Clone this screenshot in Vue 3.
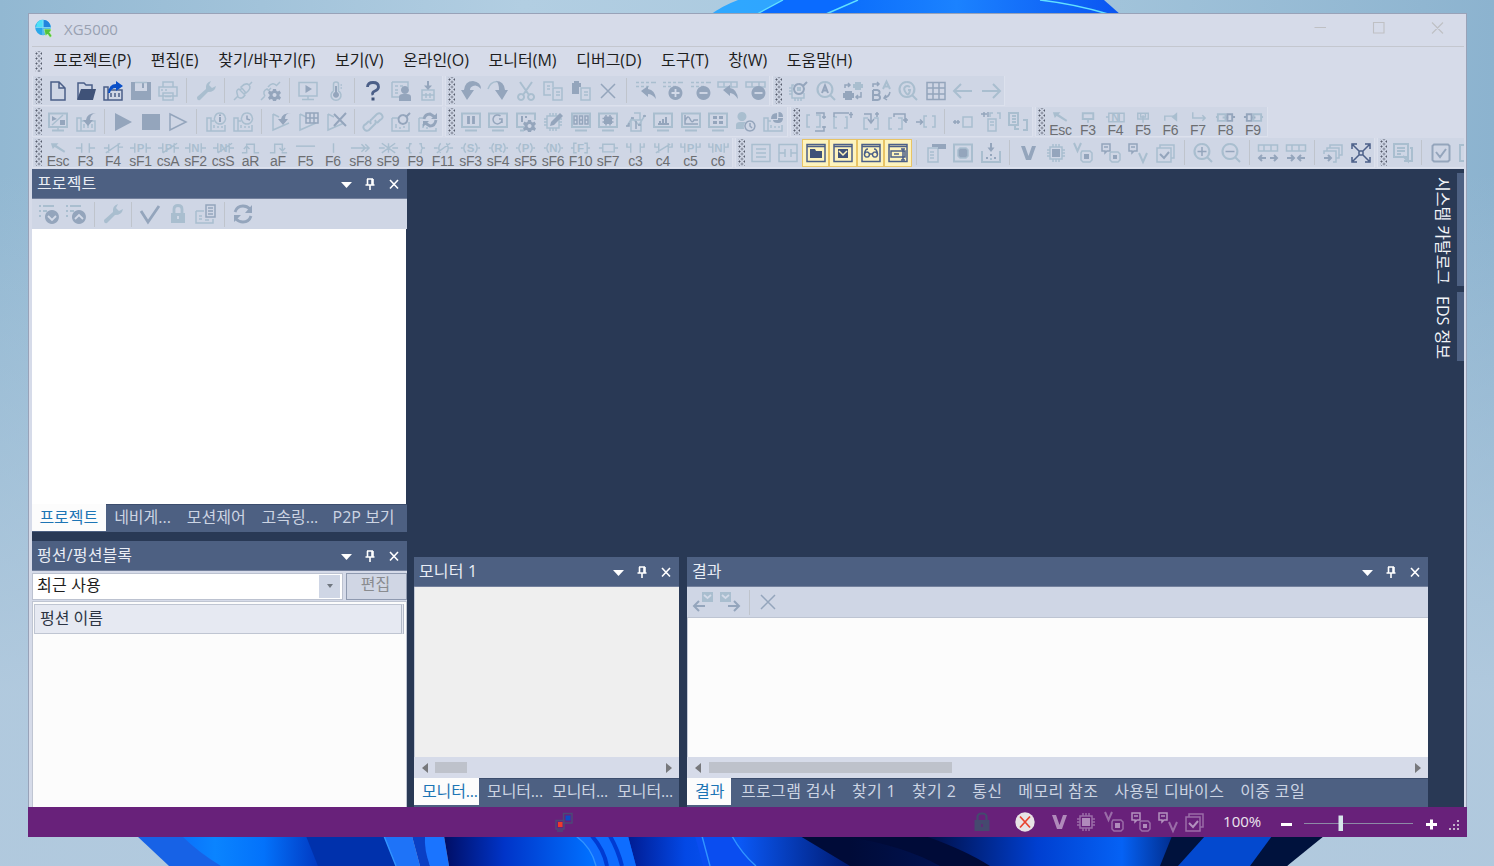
<template>
  <div class="desktop">
    <svg class="wallpaper" viewBox="0 0 1494 866">
      <defs>
        <linearGradient id="sky" x1="0" y1="0" x2="1" y2="0">
          <stop offset="0" stop-color="#92b8d2" />
          <stop offset="0.35" stop-color="#b2cee2" />
          <stop offset="0.7" stop-color="#a5c6dc" />
          <stop offset="1" stop-color="#8cb3cf" />
        </linearGradient>
        <linearGradient id="haze" x1="0" y1="0" x2="0" y2="1">
          <stop offset="0.2" stop-color="#b4cbdf" stop-opacity="0" />
          <stop offset="0.8" stop-color="#b4cbdf" stop-opacity="0.9" />
        </linearGradient>
        <linearGradient id="g1" gradientUnits="userSpaceOnUse" x1="180" y1="0" x2="320" y2="0">
          <stop offset="0" stop-color="#0a70fa" />
          <stop offset="0.25" stop-color="#0a84ff" />
          <stop offset="0.6" stop-color="#0372fb" />
          <stop offset="1" stop-color="#0138c0" />
        </linearGradient>
        <linearGradient id="g2" gradientUnits="userSpaceOnUse" x1="446" y1="0" x2="640" y2="0">
          <stop offset="0" stop-color="#000f68" />
          <stop offset="0.3" stop-color="#0034c8" />
          <stop offset="0.75" stop-color="#0070ff" />
          <stop offset="1" stop-color="#0452e8" />
        </linearGradient>
        <linearGradient id="g3" gradientUnits="userSpaceOnUse" x1="630" y1="0" x2="850" y2="0">
          <stop offset="0" stop-color="#001d95" />
          <stop offset="0.25" stop-color="#0348e5" />
          <stop offset="0.5" stop-color="#0a58f5" />
          <stop offset="1" stop-color="#001a70" />
        </linearGradient>
        <linearGradient id="g4" gradientUnits="userSpaceOnUse" x1="850" y1="0" x2="1190" y2="0">
          <stop offset="0" stop-color="#000b38" />
          <stop offset="0.25" stop-color="#00124f" />
          <stop offset="0.55" stop-color="#003fd0" />
          <stop offset="0.8" stop-color="#0562f5" />
          <stop offset="1" stop-color="#001b6a" />
        </linearGradient>
        <linearGradient id="g5" gradientUnits="userSpaceOnUse" x1="713" y1="0" x2="1119" y2="0">
          <stop offset="0" stop-color="#2fa8ff" />
          <stop offset="0.25" stop-color="#2fa4ff" />
          <stop offset="0.3" stop-color="#0a6cfb" />
          <stop offset="0.6" stop-color="#1b82ff" />
          <stop offset="1" stop-color="#0a55f2" />
        </linearGradient>
      </defs>
      <rect width="1494" height="866" fill="url(#sky)" />
      <rect width="1494" height="866" fill="url(#haze)" />
      <path fill="url(#g5)" d="M710 15 Q722 6 738 0H1104L1121 15Z" />
      <path fill="#0a6bff" d="M757 14 L783 0H850L826 14Z" />
      <path fill="none" stroke="#62e0ff" stroke-width="1.4" d="M757 14L783 0M826 14L858 0M1040 0Q1075 4 1108 14" />
      <path fill="#1762e6" d="M137 836H400V866H169Z" />
      <path fill="url(#g1)" d="M182 836H400V866H221Q198 852 182 836Z" />
      <path fill="#0031ac" d="M306 836H390L400 866H318Z" />
      <path fill="#1e73f8" d="M384 836H412L420 866H396Z" />
      <path fill="#0a3fc4" d="M412 836H426L430 866H420Z" />
      <path fill="#1a74ff" d="M425 836H444L449 866H430Q424 850 425 836Z" />
      <path fill="url(#g2)" d="M444 836H640V866H449Z" />
      <path fill="url(#g3)" d="M628 836H850V866H636Z" />
      <path fill="#0e6dff" d="M576 836Q592 848 596 866H636L628 836Z" />
      <path fill="none" stroke="#003bd2" stroke-width="4" d="M592 836Q604 850 607 866M610 836Q618 850 622 866" />
      <path fill="#0a4df0" d="M695 836H730Q744 854 754 866H703Z" />
      <path fill="none" stroke="#3194ff" stroke-width="1.4" d="M702 836L710 866M732 836Q742 854 756 866M384 836L396 866M576 836Q592 848 596 866" />
      <path fill="url(#g4)" d="M800 836H1324Q1300 848 1287 866H850Z" />
      <path fill="#000b38" d="M845 836H925Q965 850 990 866H940Q905 846 845 836Z" />
      <path fill="#00123d" d="M1172 836H1324L1287 866H1160Z" />
      <path fill="#0349cf" d="M1205 836H1272L1250 866H1178Z" />
    </svg>

    <div class="window">
      <div class="frame">
        <div class="titlebar">
          <svg class="logo" viewBox="0 0 18 20">
            <circle cx="8" cy="8.5" r="7.8" fill="#2ba7ea" />
            <path d="M2 4Q5 0 8 1V8H1Z" fill="#4edff5" />
            <path d="M9 1Q15 2 15.500 8H9Z" fill="#2385dd" />
            <path d="M8 0.700V16M0.300 8.500H15.700" stroke="#8fdcf5" stroke-width="0.800" fill="none" />
            <path d="M9 10H16V12L14.500 13 17 17 15 18.500 12.500 15 10.500 17Z" fill="#55c33a" stroke="#d5f5c8" stroke-width="0.600" />
          </svg>
          <span class="app-name">XG5000</span>
          <svg class="controls" viewBox="0 0 130 14">
            <path d="M0.500 6.500H12M59.500 1.500H70V12H59.500ZM118 1.500L129 12.500M129 1.500L118 12.500" />
          </svg>
        </div>

        <div class="menubar">
          <i class="grip"></i>
          <span v-for="m in menus" :key="m" class="menu">{{ m }}</span>
        </div>

        <div v-for="(row, r) in toolRows" :key="r" class="tool-row">
          <div v-for="(bar, b) in row" :key="b" class="toolbar">
            <i class="grip"></i>
            <template v-for="(item, i) in bar" :key="i">
              <i v-if="item === '|'" class="sep"></i>
              <span v-else-if="item.includes(':')" class="btn key">
                <svg viewBox="0 0 22 12">
                  <template v-for="(p, k) in keyIcons[item.split(':')[0]]" :key="k">
                    <text v-if="p[0] === 't'" class="glyph" x="11" y="9.500">{{ p[1] }}</text>
                    <path v-else :class="p[0]" :d="p[1]" />
                  </template>
                </svg>
                <b>{{ item.split(':')[1] }}</b>
              </span>
              <span v-else class="btn" :class="{ on: active.includes(item) }">
                <svg viewBox="0 0 20 20">
                  <path v-for="(p, k) in icons[item]" :key="k" :class="p[0]" :d="p[1]" />
                </svg>
              </span>
            </template>
          </div>
        </div>

        <div class="work">
          <div class="side">
            <section class="panel project">
              <header class="head">
                <span>프로젝트</span>
                <svg viewBox="0 0 58 14"><path class="wf" :d="headArrow" /><path class="w" :d="headPin" /></svg>
              </header>
              <div class="panel-tools">
                <template v-for="(item, i) in projectTools" :key="i">
                  <i v-if="item === '|'" class="sep"></i>
                  <span v-else class="btn">
                    <svg viewBox="0 0 20 20">
                      <path v-for="(p, k) in icons[item]" :key="k" :class="p[0]" :d="p[1]" />
                    </svg>
                  </span>
                </template>
              </div>
              <div class="tree"></div>
              <nav class="tabs project-tabs">
                <span v-for="(t, i) in projectTabs" :key="t" :class="{ current: i === 0 }">{{ t }}</span>
              </nav>
            </section>

            <section class="panel functions">
              <header class="head">
                <span>펑션/펑션블록</span>
                <svg viewBox="0 0 58 14"><path class="wf" :d="headArrow" /><path class="w" :d="headPin" /></svg>
              </header>
              <div class="filter">
                <div class="combo"><span>최근 사용</span><i></i></div>
                <button class="edit">편집</button>
              </div>
              <div class="list">
                <div class="list-head">펑션 이름</div>
              </div>
            </section>
          </div>

          <div class="center">
            <section class="panel monitor">
              <header class="head">
                <span>모니터 1</span>
                <svg viewBox="0 0 58 14"><path class="wf" :d="headArrow" /><path class="w" :d="headPin" /></svg>
              </header>
              <div class="blank"></div>
              <div class="scroll"><i class="left"></i><b></b><i class="right"></i></div>
              <nav class="tabs monitor-tabs">
                <span v-for="i in 4" :key="i" :class="{ current: i === 1 }">모니터...</span>
              </nav>
            </section>

            <section class="panel result">
              <header class="head">
                <span>결과</span>
                <svg viewBox="0 0 58 14"><path class="wf" :d="headArrow" /><path class="w" :d="headPin" /></svg>
              </header>
              <div class="panel-tools">
                <template v-for="(item, i) in resultTools" :key="i">
                  <i v-if="item === '|'" class="sep"></i>
                  <span v-else class="btn">
                    <svg viewBox="0 0 20 20">
                      <path v-for="(p, k) in icons[item]" :key="k" :class="p[0]" :d="p[1]" />
                    </svg>
                  </span>
                </template>
              </div>
              <div class="blank"></div>
              <div class="scroll"><i class="left"></i><b></b><i class="right"></i></div>
              <nav class="tabs result-tabs">
                <span v-for="(t, i) in resultTabs" :key="t" :class="{ current: i === 0 }">{{ t }}</span>
              </nav>
            </section>
          </div>

          <aside class="dock">
            <div class="dock-tab catalog">시스템 카탈로그</div>
            <div class="dock-tab eds">EDS 정보</div>
          </aside>
        </div>
      </div>

      <footer class="status">
        <svg class="link" viewBox="0 0 18 20">
          <path d="M8.500 1.500H17V11H8.500ZM1 8.500H9V17H1ZM2 19H8" fill="none" stroke="#4b4a78" stroke-width="1.400" />
          <path d="M10.500 3.500H15.500V8.500H10.500Z" fill="#0d4cc4" />
          <path d="M3 10H7.500V15H3Z" fill="#ee3a2c" />
        </svg>
        <svg class="lock" viewBox="0 0 16 20">
          <path d="M0.500 8H15.500V19H0.500Z" fill="#45496f" />
          <path d="M3.500 9V5Q3.500 1.500 8 1.500T12.500 5V9" fill="none" stroke="#45496f" stroke-width="2.200" />
          <path d="M8 12V15" stroke="#68217a" stroke-width="1.500" />
        </svg>
        <svg class="error" viewBox="0 0 20 20">
          <circle cx="10" cy="10" r="9.700" fill="#e8e4e6" />
          <path d="M5 4.500L15 15.500M15 4.500L5 15.500" stroke="#e8442f" stroke-width="1.700" />
        </svg>
        <span v-for="s in statusIcons" :key="s" class="btn">
          <svg viewBox="0 0 20 20">
            <path v-for="(p, k) in icons[s]" :key="k" :class="p[0]" :d="p[1]" />
          </svg>
        </span>
        <span class="zoom">100%</span>
        <svg class="slider" viewBox="0 0 184 24">
          <path d="M0 13H11V16H0ZM145 13H156V16H145ZM149 9.500H152V19.500H149Z" fill="#fff" />
          <path d="M23 13.500H132" stroke="#8d8aa6" stroke-width="1.200" />
          <path d="M57.500 5.500H62V21H57.500Z" fill="#d6e6ea" />
          <path d="M176 10h2v2h-2zM176 14h2v2h-2zM172 14h2v2h-2zM176 18h2v2h-2zM172 18h2v2h-2zM168 18h2v2h-2z" fill="#c3b2ca" />
        </svg>
      </footer>
    </div>
  </div>
</template>

<script setup>
const menus = [
  '프로젝트(P)', '편집(E)', '찾기/바꾸기(F)', '보기(V)', '온라인(O)',
  '모니터(M)', '디버그(D)', '도구(T)', '창(W)', '도움말(H)'
]

// '|' is a separator, 'icon:label' is a shortcut key button
const toolRows = [
  [
    ['new', 'open', 'plcOpen', 'save', 'print', '|', 'wrench', '|', 'plug', 'plugGear', '|', 'play', 'thermo', '|', 'help', 'user', 'download'],
    ['undo', 'redo', 'cut', 'copy', 'paste', 'close', '|', 'lineBack', 'lineAdd', 'lineDel', 'cellBack', 'cellDel'],
    ['chipFind', 'findA', 'chipSwap', 'replace', 'findG', 'grid', 'left', 'right']
  ],
  [
    ['monMode', 'plcDown', '|', 'run', 'stop', 'runLine', '|', 'plcInfo', 'plcTime', '|', 'flagIn', 'flagGrid', 'flagX', '|', 'chain', 'plcCheck', 'plcSync'],
    ['pause', 'refreshMon', 'monGear', 'chipEdit', 'digits', 'chipMon', 'trend', 'bars', 'wave', 'tiles', 'userTime', 'plcPie'],
    ['br1', 'br2', 'br3', 'br4', 'br5', '|', 'br6', 'br7', 'br8'],
    ['arrow:Esc', 'step:F3', 'trans:F4', 'block:F5', 'branch:F6', 'jump:F7', 'pipeL:F8', 'pipeR:F9']
  ],
  [
    ['arrow:Esc', 'no:F3', 'nc:F4', 'p:sF1', 'pf:csA', 'n:sF2', 'nf:csS', 'rise:aR', 'fall:aF', 'hline:F5', 'vline:F6', 'fast:sF8', 'star:sF9', 'coil:F9', 'ncoil:F11', 's:sF3', 'r:sF4', 'cp:sF5', 'cn:sF6', 'f:F10', 'box:sF7', 'or:c3', 'orn:c4', 'orp:c5', 'orq:c6'],
    ['text', 'contact', 'folder', 'mail', 'glasses', 'rename', '|', 'docFlag', 'chipBox', 'tray', '|', 'v', 'chip', 'vChip', 'noteChip', 'noteV', 'checks', '|', 'zoomIn', 'zoomOut', '|', 'widen', 'narrow', '|', 'stack', 'expand'],
    ['notes', '|', 'checkBox', 'more']
  ]
]
const active = ['folder', 'mail', 'glasses', 'rename']
const projectTools = ['listDown', 'listUp', '|', 'wrench', '|', 'tick', 'lock', 'plcDoc', '|', 'sync']
const resultTools = ['mailPrev', 'mailNext', '|', 'close']
const projectTabs = ['프로젝트', '네비게...', '모션제어', '고속링...', 'P2P 보기']
const resultTabs = ['결과', '프로그램 검사', '찾기 1', '찾기 2', '통신', '메모리 참조', '사용된 디바이스', '이중 코일']
const statusIcons = ['v', 'chip', 'vChip', 'noteChip', 'noteV', 'checks']

// panel header buttons
const headArrow = 'M0 5H11L5.500 11Z'
const headPin = 'M26 2H32M26.500 2V8M31 2V8M24.500 8H33.500M29 8V13M32 2V8M49 3L57 11.500M57 3L49 11.500'

// shared shapes
const plc = 'M1 6H5V19H1ZM5 9H19V19H1M8 12V16M12 12V16M16 12V16'
const plcCut = 'M1 6H5V19H1ZM5 9H8M5 19H19V13M8 13V16M12 14V16M16 14V16'
const screen = 'M1 1.500H19V15H1ZM4 18.500H16'
const chipBody = 'M4 4H16V16H4ZM7 1V4M10 1V4M13 1V4M7 16V19M10 16V19M13 16V19M1 7H4M1 10H4M1 13H4M16 7H19M16 10H19M16 13H19'
const lens = 'M14.500 14.500L19 19M9 1A7.500 7.500 0 1 1 8.900 1'
const gear = 'M12 8H15L15.500 10 17 10.500 18.500 9.500 20 12 18.500 13.500V15L20 16.500 18.500 19 17 18 15.500 18.500 15 20H12L11.500 18.500 10 18 8.500 19 7 16.500 8.500 15V13.500L7 12 8.500 9.500 10 10.500 11.500 10ZM13.500 12A2 2 0 1 0 13.600 12Z'
const flag = 'M2 2V18L18 11M2 2L8 5'
const dashes = 'M0 1.500H3M5 1.500H8M10 1.500H13M15 1.500H20M0 5.500H3M5 5.500H8M10 5.500H13'
const ring = 'M14 1A5.500 5.500 0 1 1 13.900 1'
const frame = 'M1 1.500H19V18.500H1ZM1 3.500H19'

// path classes: l/lf light stroke/fill, d/df mid, n/nf navy
const icons = {
  new: [['n', 'M3 1H11L17 7V19H3ZM11 1V7H17']],
  open: [['n', 'M2 18V2H8L10 4H16V8'], ['nf', 'M5 8H20L17 19H1Z']],
  plcOpen: [['n', plc], ['bf', 'M13 0L20 5 13 10V7Q8 7 7 12H5Q6 3 13 3Z']],
  save: [['df', 'M0 1H4V10H16V1H20V19H0ZM11 1H13V7H11Z'], ['l', 'M4 1.500H16']],
  print: [['l', 'M5 6V1H15V6M1 6H19V15H1ZM5 12H15V19H5ZM7 15.500H13M3 9H5M7 9H9']],
  wrench: [['lf', 'M1 16L10 8Q9 2 15 0L13 4 16 7 20 5Q19 11 12 11L4 19Q1 20 1 16Z']],
  plug: [['l', 'M1 19L5 15M4 12Q3 9 6 8L12 14Q9 19 5 16ZM8 6Q13 1 16 4T13 12ZM16 4L19 1M7 9L9 7M11 13L13 11']],
  plugGear: [['l', 'M0 19L4 15M4 15Q1 10 6 8L8 10M7 6Q12 0 16 5M16 4L19 1M8 9L10 7'], ['df', gear]],
  play: [['l', screen], ['l', 'M10 15V18'], ['df', 'M7.500 4L14 8 7.500 12Z']],
  thermo: [['l', 'M7.500 10V3Q7.500 1 10 1T12.500 3V10A5 5 0 1 1 7.500 10M14.500 4H16M14.500 7H16'], ['df', 'M9 5H11V11A3 3 0 1 1 9 11Z']],
  help: [['n3', 'M4.500 6Q4.500 1.500 10 1.500T15.500 6Q15.500 8.500 12 10T10 14'], ['nf', 'M8.500 16.500H11.500V19.500H8.500Z']],
  user: [['l', 'M1 1H17V7M1 1V16H9M4 5H7M9 5H12M4 9H7M4 12H7'], ['df', 'M14 5A4 4 0 1 1 13.900 5ZM8 20V16Q8 13 12 13H16Q20 13 20 16V20Z']],
  download: [['l', 'M4 9H16V19H4ZM8 12V17M12 12V17M4 14H16'], ['d2', 'M10 0V6'], ['df', 'M6 4.500H14L10 9Z']],
  undo: [['df', 'M0 9H3Q4 0 12 0Q20 1 20 8Q16 3 12 5Q9 6 9 9H13L6 19Z']],
  redo: [['l', 'M0 8Q2 1 9 0.500'], ['df', 'M20 9H17Q16 0 8 0Q11 2 11 9H7L14 19Z']],
  cut: [['l2', 'M4 1L13 14M16 1L7 14M5 13A3 3 0 1 0 5.100 13M15 13A3 3 0 1 0 15.100 13']],
  copy: [['l', 'M10 6V1H1V14H8M4 5H7M4 8H7M10 7H19V19H10ZM13 11H17M13 14H17']],
  paste: [['df', 'M1 2H3V0H8V2H10V6H8V13H1Z'], ['l', 'M10 7H19V19H10ZM13 11H17M13 14H17']],
  close: [['d', 'M3 3L17 17M17 3L3 17']],
  lineBack: [['l', dashes], ['df', 'M5 10L12 5V8Q19 9 20 18Q16 13 12 13V16Z']],
  lineAdd: [['l', dashes], ['df', 'M12.500 5A7 7 0 1 1 12.400 5Z'], ['b', 'M12.500 8V16M8.500 12H16.500']],
  lineDel: [['l', dashes], ['df', 'M12.500 5A7 7 0 1 1 12.400 5Z'], ['b', 'M8.500 12H16.500']],
  cellBack: [['l', 'M0 1H19V6H0ZM6 1V6M13 1V6'], ['df', 'M5 9L12 4V7Q19 8 20 18Q16 12 12 12V15Z']],
  cellDel: [['l', 'M0 1H19V6H0ZM6 1V6M13 1V6'], ['df', 'M12.500 5A7 7 0 1 1 12.400 5Z'], ['b', 'M8.500 12H16.500']],
  chipFind: [['l', 'M6 4H4V17H16V12M7 17V20M10 17V20M13 17V20M1 7H4M1 10H4M1 13H4'], ['d2', 'M11 3A5 5 0 1 1 10.900 3M15 5L19 1'], ['lf', 'M9 6H13V10H9Z']],
  findA: [['l2', lens], ['d2', 'M6 12L9 4.500 12 12M7 9.500H11']],
  chipSwap: [['lf', 'M12 1H18V3H20V7H18V9H12V7H10V3H12Z'], ['df', 'M2 10H9V12H11V17H9V19H2V17H0V12H2Z'], ['d', 'M2 7V4H7M5 2L7 4 5 6M18 11V16H13M15 14L13 16 15 18']],
  replace: [['l2', 'M12 8L15.500 0.500 19 8M13 5.500H18'], ['d2', 'M2 9V19H6.500Q9.500 18.500 9 16 8.500 14 6 14H2M2 9H6Q9 9.500 8.500 12 8 14 6 14'], ['d', 'M2 6V3H8M6 1L8 3 6 5M19 11Q18 16 13 17M15 14L13 17 16 19']],
  findG: [['l2', lens], ['l2', 'M12 6Q9 4 7 6T8 12 12 9H10']],
  grid: [['d', 'M1 1.500H19V18.500H1ZM1 7H19M1 13H19M7 1V19M13 1V19']],
  left: [['l2', 'M1 10H19M8 3L1 10 8 17']],
  right: [['l2', 'M1 10H19M12 3L19 10 12 17']],
  monMode: [['l2', screen], ['l', 'M4 13L15 3M10 15V18'], ['df', 'M4 4L9 7 4 9ZM12 8H17V13H12Z']],
  plcDown: [['l', plc], ['df', 'M20 1Q14 2 14 8H17L12 14 7 8H10Q11 1 20 1Z']],
  run: [['df', 'M2 1L19 10 2 19Z']],
  stop: [['df', 'M1 2H19V18H1Z']],
  runLine: [['d', 'M2 2L18 10 2 18Z']],
  plcInfo: [['l', plcCut], ['l', ring], ['d2', 'M14 5V10M14 2.500V4']],
  plcTime: [['l', plcCut], ['l', ring], ['d', 'M14 3.500V7L17 8']],
  flagIn: [['l', flag], ['df', 'M20 1Q14 1 14 7H17L12 13 7 7H10Q11 1 20 1Z']],
  flagGrid: [['l', flag], ['d', 'M8 1H20V11H8ZM12 1V11M16 1V11M8 6H20']],
  flagX: [['l', flag], ['d2', 'M8 2L20 14M20 1L8 14']],
  chain: [['l2', 'M8 12Q6 9 9 7L14 2Q17 0 19 3T17 8L14 11M12 8Q14 11 11 13L6 18Q3 20 1 17T3 12L6 9']],
  plcCheck: [['l', 'M1 6H7M1 6V19H18V10M5 12V16M9 15V17M13 14V16'], ['d2', 'M12 3A4.500 4.500 0 1 1 11.900 3M15 5L19 1']],
  plcSync: [['l', 'M1 6H5M1 6V19H18V16M5 12V16M9 15V17'], ['d3', 'M6 7Q7 2 12 2L17 5M18 8Q17 14 12 14L7 11'], ['df', 'M19 1V7H13ZM5 9H11L5 15Z']],
  pause: [['l2', screen], ['d3', 'M7.500 4V12M12.500 4V12']],
  refreshMon: [['l2', screen], ['d', 'M14 8A4.500 4.500 0 1 1 12.500 4M14 11V7H11']],
  monGear: [['l2', 'M8 15H1V1.500H19V8M4 18.500H8'], ['d2', 'M6 4V10M10 4V6'], ['df', gear]],
  chipEdit: [['l', chipBody], ['df', 'M8 10L17 1 20 4 11 13 7 14Z']],
  digits: [['l2', screen], ['d', 'M3 4H6V12H3ZM8.500 4H11.500V12H8.500ZM14 4H17V12H14ZM3 8H6M8.500 8H11.500M14 8H17']],
  chipMon: [['l2', screen], ['df', 'M6 4.500H14V12H6Z'], ['d', 'M8 3V13.500M12 3V13.500M4.500 6.500H15.500M4.500 10H15.500']],
  trend: [['l', 'M5 19V8H15V19ZM8 1H14V8M1 14L6 6 13 13 19 3'], ['d', 'M0 14H3V11M5 6H8M12 13H15M17 4H20M10 9V17']],
  bars: [['l2', screen], ['d2', 'M5 12H16M7 11V9M10 11V7M13 11V5']],
  wave: [['l2', screen], ['d', 'M4 3V12H17M4 9Q7 2 9 7T13 8H17']],
  tiles: [['l2', screen], ['df', 'M5 4H9V7H5ZM11 4H15V7H11ZM5 9H9V12H5ZM11 9H15V12H11Z']],
  userTime: [['lf', 'M6 0A4.500 4.500 0 1 1 5.900 0ZM0 17V13Q0 10 4 10H10Q7 12 8 17Z'], ['d', 'M14 9A5 5 0 1 1 13.900 9M14 11V14L16 16']],
  plcPie: [['l', plcCut], ['df', 'M14 1V7H8Q8 1 14 1ZM15.500 0Q20 0 20 5H15.500ZM15 6H20Q20 11 15 11Q10 11 10 8H15Z']],
  br1: [['l', 'M4 3H1V15H4M10 3H14V15H10'], ['d', 'M10 1H18V5M18 14V19H9M16 5H20M18 3V7M16 15H20']],
  br2: [['l', 'M4 5H1V16H4M12 5H14V16H11'], ['d', 'M1 5V1H16M16 2.500H20M18 0V6']],
  br3: [['l', 'M7 6H3V17H7M13 6H17V17H13'], ['d', 'M3 2H10V10M7 7L10 11 13 7M14 2H18M16 0V5']],
  br4: [['l', 'M4 6H1V17H4M10 6H14V17H10'], ['d', 'M6 5V2H17V10M15 8H20M18 6V11']],
  br5: [['l', 'M11 4H8V15H11M16 4H19V15H16'], ['d', 'M0 10H6M4 7.500L6.500 10 4 12.500']],
  br6: [['l', 'M10 5H19V15H10Z'], ['d', 'M0 10H7M2 8V12M5 8V12']],
  br7: [['l', 'M7 7H15V19H7ZM9 10H13M9 13H13M12 1H9V5M16 1H19V7'], ['d', 'M0 2H6M3 0V5M7 0V5']],
  br8: [['l2', 'M1 1H10V13H1ZM4 4H8M4 7H8M4 10H8M7 13V17H11M15 8H19V18H15']],
  text: [['l', 'M1 1.500H19V18.500H1ZM5 6H15M5 10H15M5 14H15']],
  contact: [['l', 'M1 1.500H19V18.500H1ZM1 10H7M7 6V14M13 6V14M13 10H19']],
  folder: [['n', frame], ['nf', 'M4 6H9L10 8H16V15H4Z']],
  mail: [['n', frame], ['nf', 'M5 6H15V15H5Z'], ['y', 'M6 8L10 12 14 8']],
  glasses: [['n', frame], ['n', 'M6 9A2.500 2.500 0 1 1 5.900 9M14 9A2.500 2.500 0 1 1 13.900 9M8 11H12M3.500 11Q4 6 7 6M16.500 11Q16 6 13 6']],
  rename: [['n', frame], ['n', 'M3 8H17V14H3ZM6 11H11M13 6H17M15 6V17M13 17H17']],
  docFlag: [['l', 'M2 5H12V19H2ZM4 9H8M4 12H8M4 15H8'], ['df', 'M6 1H20V6H12V4H6Z']],
  chipBox: [['l2', 'M1 1.500H19V18.500H1Z'], ['df', 'M7 5H13L15 7V13L13 15H7L5 13V7Z'], ['l', 'M7 5H13L15 7V13L13 15H7L5 13V7Z']],
  tray: [['l2', 'M1 8V19H19V8'], ['d2', 'M10 0V6'], ['df', 'M6.500 4.500H13.500L10 9ZM5 14H7V16H5ZM9 11H11V13H9ZM13 14H15V16H13Z'], ['lf', 'M9 15H11V17H9Z']],
  v: [['df', 'M3 3H7L10.500 13 14 3H18L13 17H8Z']],
  chip: [['l', chipBody], ['df', 'M6 6H14V14H6Z']],
  vChip: [['l2', 'M1 0L4.500 8 8 0'], ['l', 'M9 8H17L19 10V17L17 19H10L8 17V10Z'], ['df', 'M11 11H16V16H11Z']],
  noteChip: [['d', 'M1 1H9V8H6L4 10V8H1ZM3 4H7'], ['l', 'M10 9H17L19 11V17L17 19H11L9 17V10Z'], ['df', 'M12 12H16V16H12Z']],
  noteV: [['d', 'M1 1H9V8H6L4 10V8H1ZM3 4H7'], ['l2', 'M11 10L15 19 19 10']],
  checks: [['l', 'M1 5H15V19H1ZM4 5V2H18V15H15'], ['d2', 'M4 11L8 15 13 9']],
  zoomIn: [['l2', lens], ['d', 'M9 4V13M4.500 8.500H13.500']],
  zoomOut: [['l2', lens], ['d', 'M4.500 8.500H13.500']],
  widen: [['l', 'M0.500 2H19.500V8H0.500ZM6 2V8M13 2V8'], ['d2', 'M1 15H8M4 12L1 15 4 18M12 15H19M16 12L19 15 16 18']],
  narrow: [['l', 'M0.500 2H19.500V8H0.500ZM6 2V8M13 2V8'], ['d2', 'M1 15H8M5 12L8 15 5 18M12 15H19M15 12L12 15 15 18']],
  stack: [['l', 'M1 11V8H13V19H10M4 8V5H16V15H13M7 5V2H19V12H16'], ['d2', 'M1 15H8M5 12L8 15 5 18']],
  expand: [['n', 'M1 6V1H6M14 1H19V6M19 14V19H14M6 19H1V14M2 2L7.500 7.500M18 2L12.500 7.500M18 18L12.500 12.500M2 18L7.500 12.500M8 8H12V12H8Z']],
  notes: [['l2', 'M1 1H15V14H1ZM4 5H12M4 8H12M4 11H8M17 5H19V18H11M10 13L15 18V14']],
  checkBox: [['d2', 'M3 1.500H17L18.500 3V17L17 18.500H3L1.500 17V3ZM5 9L9 14 15 6']],
  more: [['l2', 'M6 2H2V18H6']],
  listDown: [['l2', 'M1 2H3M5 2H16M1 7H3M5 7H9M1 12H3'], ['df', 'M14 6A7 7 0 1 1 13.900 6Z'], ['b', 'M10 12L14 16 18 12']],
  listUp: [['l2', 'M1 2H3M5 2H16M1 7H3M5 7H9M1 12H3'], ['df', 'M14 6A7 7 0 1 1 13.900 6Z'], ['b', 'M10 15L14 11 18 15']],
  tick: [['d3', 'M1 7L8 18 19 2']],
  lock: [['lf', 'M3 9H17V19H3Z'], ['l3', 'M6 9V5Q6 1.500 10 1.500T14 5V9'], ['b', 'M10 12V15']],
  plcDoc: [['l', 'M1 7H9M1 7V19H18V15M4 12H7M4 15H7M10 16H14'], ['d', 'M11 1H20V13H11ZM13 4H18M13 7H18M13 10H18']],
  sync: [['d3', 'M2 8Q4 2 10 2 14 2 17 5M18 12Q16 18 10 18 6 18 3 15'], ['df', 'M19 1V9H12ZM1 11H8L1 18Z']],
  mailPrev: [['lf', 'M9 0H20V10H9Z'], ['b', 'M11 3L14.500 6 18 3'], ['d2', 'M12 14H1M6 9L1 14 6 19']],
  mailNext: [['lf', 'M0 0H11V10H0Z'], ['b', 'M2 3L5.500 6 9 3'], ['d2', 'M8 14H19M14 9L19 14 14 19']]
}

const keyIcons = {
  arrow: [['lf', 'M3 0H11L9 2 18 8 17 10 7 4 5 6Z']],
  no: [['l', 'M1 5H7V0M7 5V10M15 0V10M15 5H21']],
  nc: [['l', 'M1 5H6V1M6 5V10M3 10L18 0M16 0V10M16 4H21']],
  p: [['l', 'M0 5H5M5 0V10M17 0V10M17 5H22'], ['t', 'P']],
  pf: [['l', 'M0 5H5M5 0V10M17 0V10M17 5H22M5 10L20 0'], ['t', 'P']],
  n: [['l', 'M0 5H5M5 0V10M17 0V10M17 5H22'], ['t', 'N']],
  nf: [['l', 'M0 5H5M5 0V10M17 0V10M17 5H22M5 10L20 0'], ['t', 'N']],
  rise: [['l', 'M2 10H7V1H15V10H20M4 6L7 3 10 6']],
  fall: [['l', 'M2 10H7V1H15V10H20M12 5L15 8 18 5']],
  hline: [['l', 'M1 3H21']],
  vline: [['l', 'M11 0V10']],
  fast: [['l', 'M1 5H20M12 1L16 5 12 9M16 1L20 5 16 9']],
  star: [['l', 'M1 5H7M15 5H21M11 0V10M4 0L18 10M18 0L4 10']],
  coil: [['l', 'M1 5H3Q5 5 5 0.500H7M3 5Q5 5 5 10H7M21 5H19Q17 5 17 0.500H15M19 5Q17 5 17 10H15']],
  ncoil: [['l', 'M1 5H5M8 0Q4 5 8 10M14 0Q18 5 14 10M17 5H21M4 10L18 0']],
  s: [['l', 'M1 5H3M6 0Q2 5 6 10M16 0Q20 5 16 10M19 5H21'], ['t', 'S']],
  r: [['l', 'M1 5H3M6 0Q2 5 6 10M16 0Q20 5 16 10M19 5H21'], ['t', 'R']],
  cp: [['l', 'M1 5H3M6 0Q2 5 6 10M16 0Q20 5 16 10M19 5H21'], ['t', 'P']],
  cn: [['l', 'M1 5H3M6 0Q2 5 6 10M16 0Q20 5 16 10M19 5H21'], ['t', 'N']],
  f: [['l', 'M1 5H4M7 0H4V10H7M15 0H18V10H15M18 5H21'], ['t', 'F']],
  box: [['l', 'M1 5H5V1H17V9H5V5M17 5H21']],
  or: [['l', 'M2 0V4H6M6 0V10M16 0V10M20 0V4H16']],
  orn: [['l', 'M2 0V4H6M6 0V10M16 0V10M20 0V4H16M3 10L18 1']],
  orp: [['l', 'M1 0V4H5M5 0V10M17 0V10M21 0V4H17'], ['t', 'P']],
  orq: [['l', 'M1 0V4H5M5 0V10M17 0V10M21 0V4H17'], ['t', 'N']],
  step: [['l2', 'M5 1H16V7H5ZM10.500 7V11']],
  trans: [['l', 'M1 5H4V1H20V10H4V5M15 1V10'], ['t', 'N']],
  block: [['l', 'M5 1H16V7H5ZM10.500 3V11M8 1V5H13V1']],
  branch: [['l', 'M5 9V4H17'], ['lf', 'M12 5L18 0V10Z']],
  jump: [['l', 'M5 0V6H18M15 3L18 6 15 9']],
  pipeL: [['l2', 'M1 5H4M3 2H11V9H3ZM8 5.500H14'], ['d2', 'M13 2H18V9H13ZM18 5H21']],
  pipeR: [['d2', 'M1 5H4M4 2H9V9H4ZM9 5.500H13'], ['l2', 'M11 2H19V9H11ZM19 5H21']]
}
</script>

<style>
html, body {
  overflow: hidden;
}
</style>

<style scoped>
.desktop {
  position: relative;
  width: 1494px;
  height: 866px;
  overflow: hidden;
  font-family: "Open Sans", "Noto Sans CJK KR", sans-serif;
  font-size: 16px;
  color: #1e1e1e;
}
.wallpaper {
  position: absolute;
  left: 0;
  top: 0;
  width: 1494px;
  height: 866px;
}
.window {
  position: absolute;
  left: 28px;
  top: 13px;
  width: 1439px;
  height: 824px;
  display: flex;
  flex-direction: column;
  white-space: nowrap;
}
.frame {
  box-sizing: border-box;
  height: 794px;
  display: flex;
  flex-direction: column;
  padding: 0 2px 0 3px;
  border: 1px solid #98a2b8;
  border-bottom: 0;
  background: #d6dbe9;
}

.titlebar {
  height: 32px;
  display: flex;
  align-items: center;
  border-bottom: 1px solid #c4c7cf;
}
.logo {
  width: 18px;
  height: 20px;
  margin: -2px 0 0 3px;
}
.app-name {
  margin: -2px 0 0 11px;
  font-size: 15px;
  color: #99a1b2;
}
.controls {
  width: 130px;
  height: 14px;
  margin: -5px 20px 0 auto;
  fill: none;
  stroke: #bfc0c4;
  stroke-width: 1.1;
}

.menubar {
  height: 29px;
  display: flex;
  align-items: center;
  padding-left: 1px;
}
.menubar .grip {
  height: 21px;
}
.menu {
  line-height: 24px;
  margin: -3px 9.8px 0 9.8px;
}
.menubar .grip + .menu {
  margin-left: 9px;
}

.tool-row {
  height: 31px;
  flex: none;
  display: flex;
  gap: 3.75px;
  padding-left: 1px;
  overflow: hidden;
}
.toolbar {
  height: 29px;
  flex: none;
  display: flex;
  align-items: center;
  background: #cfd6e5;
  box-shadow: 0 0 0 1px #dce1ed;
}
.grip {
  width: 7px;
  height: 27px;
  flex: none;
  margin: 0 2.25px 0 2px;
  background-image: radial-gradient(circle, #565c6c 0.9px, transparent 1.1px), radial-gradient(circle, #565c6c 0.9px, transparent 1.1px);
  background-size: 5px 5px;
  background-position: -1px 0, 1.5px 2.5px;
}
.btn {
  box-sizing: border-box;
  width: 27.5px;
  height: 28px;
  flex: none;
  display: flex;
  align-items: center;
  justify-content: center;
}
.btn svg {
  width: 20px;
  height: 20px;
  flex: none;
  overflow: visible;
}
.btn.on {
  border: 1.5px solid #e8c466;
  background: #fdf3bd;
}
.btn.key {
  flex-direction: column;
  justify-content: flex-start;
}
.btn.key svg {
  width: 21px;
  height: 12px;
  margin-top: 4px;
}
.btn.key b {
  position: relative;
  font: 14px/14px "Liberation Sans", Arial, sans-serif;
  letter-spacing: -0.2px;
  color: #6c6e72;
  margin-top: -1px;
}
.glyph {
  font: bold 12px "Liberation Sans", Arial, sans-serif;
  text-anchor: middle;
  fill: #a9becf;
}
.sep {
  width: 1px;
  height: 25px;
  flex: none;
  margin: 0 4.5px;
  background: #bfc4cc;
}

.l, .l2, .l3, .d, .d2, .d3, .n, .n2, .n3, .b, .y, .w { fill: none; stroke-width: 1.5; }
.l, .l2, .l3 { stroke: #a9becf; }
.d, .d2, .d3 { stroke: #94a5bc; }
.n, .n2, .n3 { stroke: #4b5f88; }
.l2, .d2, .n2 { stroke-width: 2; }
.l3, .d3, .n3 { stroke-width: 2.8; }
.lf { fill: #a9becf; }
.df { fill: #94a5bc; }
.nf { fill: #3f5278; }
.bf { fill: #0b50c8; }
.b { stroke: #d3dae8; stroke-width: 1.8; }
.y { stroke: #fdf3bd; stroke-width: 1.5; }
.w { stroke: #fff; stroke-width: 1.6; }
.wf { fill: #fff; }

.work {
  height: 638px;
  flex: none;
  display: flex;
  background: #293955;
}
.side {
  width: 375px;
  display: flex;
  flex-direction: column;
  gap: 9px;
}
.panel {
  display: flex;
  flex-direction: column;
}
.project {
  height: 363px;
}
.functions {
  flex: 1;
  background: #d6dbe9;
}
.head {
  box-sizing: border-box;
  height: 30px;
  flex: none;
  display: flex;
  align-items: center;
  justify-content: space-between;
  padding: 0 8px 0 5px;
  background: #4d6082;
  border-bottom: 1px solid #73809c;
  color: #e9edf5;
}
.head span {
  line-height: 24px;
  margin-top: -2px;
  letter-spacing: 0.15px;
}
.head svg {
  width: 58px;
  height: 14px;
  margin-top: 1px;
}
.panel-tools {
  height: 30px;
  flex: none;
  display: flex;
  align-items: center;
  padding-left: 2px;
  background: #cfd6e5;
}
.tree {
  flex: 1;
  background: #fff;
  margin-right: 1px;
}

.tabs {
  box-sizing: border-box;
  height: 28px;
  flex: none;
  display: flex;
  background: #4d6082;
  box-shadow: inset 0 1px #3c4d6d;
  color: #ccd4e3;
}
.tabs span {
  box-sizing: border-box;
  line-height: 26px;
  height: 27px;
}
.tabs .current {
  background: #fcfcfc;
  color: #1d75b5;
}
.project-tabs span {
  width: 73.7px;
  text-align: center;
}

.filter {
  height: 30px;
  flex: none;
  display: flex;
  align-items: center;
  gap: 3px;
}
.combo {
  box-sizing: border-box;
  width: 311px;
  height: 27px;
  display: flex;
  align-items: center;
  justify-content: space-between;
  padding: 1px 2px 1px 4px;
  border: 1px solid #bcc2d0;
  background: #fff;
}
.combo span {
  margin-top: -2px;
  line-height: 22px;
  letter-spacing: 0.2px;
}
.combo i {
  width: 21px;
  height: 23px;
  display: flex;
  align-items: center;
  justify-content: center;
  background: #cfd6e5;
}
.combo i::after {
  content: "";
  border: 3px solid transparent;
  border-top: 4px solid #707780;
  border-bottom: 0;
}
.edit {
  width: 61px;
  height: 27px;
  padding: 0 2px 4px 0;
  border: 1px solid #8f9ab0;
  background: #d0d6e4;
  font: inherit;
  line-height: 20px;
  color: #8a8c90;
}
.list {
  flex: 1;
  padding: 2px 2px 0 1px;
  border: 1px solid #bfc5d2;
  border-bottom: 0;
  background: #fcfcfc;
}
.list-head {
  box-sizing: border-box;
  width: 370px;
  height: 30px;
  padding-left: 5px;
  border: 1px solid #bfc5d2;
  border-right: 3px double #b2b9c7;
  background: #e6e9f2;
  line-height: 27px;
  color: #2c3443;
}

.center {
  width: 1014px;
  flex: none;
  display: flex;
  align-items: flex-end;
  gap: 8px;
  margin-left: 7px;
}
.monitor {
  width: 265px;
  height: 250px;
}
.result {
  width: 741px;
  height: 250px;
}
.blank {
  flex: 1;
  background: #fcfcfc;
  border-left: 1px solid #c4cad7;
}
.monitor .blank {
  background: #efefef;
}
.center .tabs {
  height: 29px;
}
.center .tabs .current {
  height: 27px;
}
.result .panel-tools {
  border-bottom: 1px solid #bdc4d2;
}
.scroll {
  height: 21px;
  flex: none;
  display: flex;
  align-items: center;
  padding: 0 7px 0 8px;
  background: #d6dbe9;
}
.scroll i {
  border: 5px solid transparent;
}
.scroll .left {
  border-left: 0;
  border-right: 6px solid #77787c;
}
.scroll .right {
  border-right: 0;
  border-left: 6px solid #77787c;
  margin-left: auto;
}
.scroll b {
  width: 32px;
  height: 11px;
  margin-left: 7px;
  background: #bec2cb;
}
.result .scroll b {
  width: 243px;
  margin-left: 8px;
}
.monitor-tabs span {
  width: 65.1px;
  flex: none;
  padding-left: 8px;
  letter-spacing: -0.15px;
}
.result-tabs span {
  padding: 0 8px;
  letter-spacing: 0.35px;
}
.result-tabs .current {
  padding: 0 7px 0 8px;
  margin-right: 1.5px;
  letter-spacing: 0;
}

.dock {
  width: 36px;
  display: flex;
  flex-direction: column;
  align-items: flex-end;
  gap: 6px;
  padding-top: 4px;
}
.dock-tab {
  box-sizing: border-box;
  writing-mode: vertical-rl;
  text-orientation: sideways;
  padding-top: 4px;
  line-height: 22px;
  padding-right: 3px;
  border-right: 7px solid #4d6082;
  color: #f2f4f8;
}
.catalog {
  height: 113px;
}
.eds {
  height: 69px;
}

.status {
  height: 30px;
  flex: none;
  display: flex;
  align-items: center;
  background: #68217a;
}
.status svg {
  flex: none;
}
.status .link {
  width: 18px;
  height: 20px;
  margin-left: 527px;
}
.status .lock {
  width: 16px;
  height: 20px;
  margin-left: 401px;
}
.status .error {
  width: 20px;
  height: 20px;
  margin: 0 10.3px 0 25px;
}
.status .btn {
  width: 27.3px;
}
.status .btn .l,
.status .btn .l2 { stroke: #9a6ca8; }
.status .btn .d,
.status .btn .d2 { stroke: #b391be; }
.status .btn .df { fill: #b08abb; }
.zoom {
  width: 58px;
  flex: none;
  margin-left: 14px;
  font-size: 15px;
  line-height: 20px;
  margin-top: -2px;
  color: #ece5ee;
}
.slider {
  width: 184px;
  height: 24px;
}
</style>
